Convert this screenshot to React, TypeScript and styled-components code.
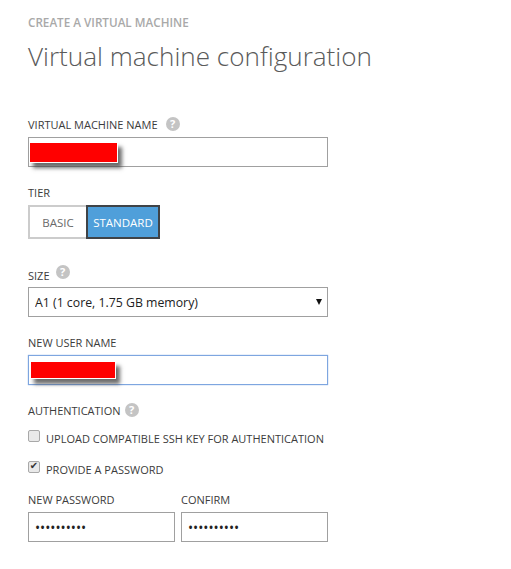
import React from 'react';
import styled, { createGlobalStyle } from 'styled-components';

const GlobalStyle = createGlobalStyle`
  html, body {
    margin: 0;
    background: #fff;
  }
  body {
    font-family: "Open Sans", "Noto Sans", "Liberation Sans", sans-serif;
  }
`;

const Page = styled.div`
  width: 511px;
  height: 569px;
  box-sizing: border-box;
  padding: 15px 0 0 28px;
  overflow: hidden;
`;

const Crumb = styled.div`
  font-size: 11.7px;
  font-weight: 600;
  line-height: 15px;
  color: #a9a9a9;
`;

const Title = styled.h1`
  margin: 8px 0 0;
  font-size: 26.1px;
  font-weight: 300;
  line-height: 36px;
  color: #5a5a5a;
`;

const Form = styled.div`
  width: 300px;
  margin-top: 43px;
  display: flex;
  flex-direction: column;
`;

const LabelRow = styled.div<{ $top: number; $gap?: number }>`
  display: flex;
  align-items: center;
  height: 16px;
  margin-top: ${(p) => p.$top}px;
  margin-bottom: ${(p) => p.$gap ?? 4}px;
`;

const Label = styled.label`
  font-size: 11px;
  line-height: 16px;
  color: #3c3c3c;
  white-space: nowrap;
`;

const Help = styled.span<{ $lift: number; $left: number }>`
  width: 14px;
  height: 14px;
  margin-top: -${(p) => p.$lift}px;
  margin-left: ${(p) => p.$left}px;
  border-radius: 50%;
  background: #c4c4c4;
  color: #fff;
  font-size: 11px;
  font-weight: 700;
  line-height: 14px;
  text-align: center;
`;

const FieldWrap = styled.div`
  position: relative;
  flex: 1;
`;

const Input = styled.input<{ $focus?: boolean }>`
  display: block;
  width: 100%;
  height: 30px;
  box-sizing: border-box;
  padding: 0 6px;
  border: 1px solid ${(p) => (p.$focus ? '#7ea6e0' : '#a0a0a0')};
  border-radius: 0;
  outline: none;
  background: #fff;
  box-shadow: ${(p) => (p.$focus ? '0 0 1px #7ea6e0' : 'none')};
  font-family: inherit;
  font-size: 13.6px;
  color: #222;
`;

const Redaction = styled.div<{ $left: number; $top: number; $w: number; $h: number }>`
  position: absolute;
  left: ${(p) => p.$left}px;
  top: ${(p) => p.$top}px;
  width: ${(p) => p.$w}px;
  height: ${(p) => p.$h}px;
  background: #f00;
  border: 1px solid #fff;
  box-shadow: 4px 5px 4px rgba(60, 60, 60, 0.75);
`;

const Tiers = styled.div`
  display: flex;
`;

const Tier = styled.button<{ $active?: boolean }>`
  height: 34px;
  box-sizing: border-box;
  padding: 0;
  border: 2px solid ${(p) => (p.$active ? '#3f4347' : '#cccccc')};
  border-right-width: ${(p) => (p.$active ? 2 : 0)}px;
  background: ${(p) => (p.$active ? '#4f9fda' : '#fff')};
  color: ${(p) => (p.$active ? '#fff' : '#6a6a6a')};
  width: ${(p) => (p.$active ? 74 : 58)}px;
  font-family: inherit;
  font-size: 11.5px;
`;

const SelectWrap = styled.div`
  position: relative;
`;

const Select = styled.select`
  display: block;
  width: 100%;
  height: 30px;
  box-sizing: border-box;
  padding: 0 6px;
  border: 1px solid #a0a0a0;
  border-radius: 0;
  outline: none;
  background: #fff;
  appearance: none;
  font-family: inherit;
  font-size: 12.3px;
  color: #222;
`;

const Caret = styled.svg`
  position: absolute;
  right: 6px;
  top: 12px;
  width: 6px;
  height: 6px;
`;

const CheckRow = styled.label<{ $top: number }>`
  display: flex;
  align-items: center;
  gap: 6px;
  height: 16px;
  margin-top: ${(p) => p.$top}px;
  font-size: 11px;
  color: #3c3c3c;
  white-space: nowrap;
`;

const Check = styled.input`
  appearance: none;
  position: relative;
  width: 12px;
  height: 12px;
  box-sizing: border-box;
  margin: -4px 0 0;
  border: 1px solid #a8a8a8;
  border-radius: 2px;
  background: #e9e9e9;

  &:checked::after {
    content: "✔";
    position: absolute;
    left: 0;
    top: -2px;
    width: 10px;
    font-family: "DejaVu Sans", sans-serif;
    font-size: 10px;
    line-height: 12px;
    text-align: center;
    color: #333;
  }
`;

const Pair = styled.div`
  display: grid;
  grid-template-columns: 147px 147px;
  column-gap: 6px;
  margin-top: 15px;
`;

const PairLabel = styled(Label)`
  display: block;
  margin-bottom: 4px;
`;

export default function App() {
  return (
    <>
      <GlobalStyle />
      <Page>
        <Crumb>CREATE A VIRTUAL MACHINE</Crumb>
        <Title>Virtual machine configuration</Title>
        <Form>
          <LabelRow $top={0}>
            <Label>VIRTUAL MACHINE NAME</Label>
            <Help $lift={3} $left={8}>?</Help>
          </LabelRow>
          <FieldWrap>
            <Input readOnly />
            <Redaction $left={1} $top={5} $w={87} $h={19} />
          </FieldWrap>
          <LabelRow $top={18}>
            <Label>TIER</Label>
          </LabelRow>
          <Tiers>
            <Tier>BASIC</Tier>
            <Tier $active>STANDARD</Tier>
          </Tiers>
          <LabelRow $top={29} $gap={3}>
            <Label>SIZE</Label>
            <Help $lift={8} $left={6}>?</Help>
          </LabelRow>
          <SelectWrap>
            <Select defaultValue="a1">
              <option value="a1">A1 (1 core, 1.75 GB memory)</option>
            </Select>
            <Caret viewBox="0 0 6 6">
              <path d="M0 0h6L3 6z" fill="#111" />
            </Caret>
          </SelectWrap>
          <LabelRow $top={18}>
            <Label>NEW USER NAME</Label>
          </LabelRow>
          <FieldWrap>
            <Input readOnly $focus />
            <Redaction $left={2} $top={6} $w={84} $h={16} />
          </FieldWrap>
          <LabelRow $top={18} $gap={11}>
            <Label>AUTHENTICATION</Label>
            <Help $lift={2} $left={4}>?</Help>
          </LabelRow>
          <CheckRow $top={0}>
            <Check type="checkbox" readOnly />
            UPLOAD COMPATIBLE SSH KEY FOR AUTHENTICATION
          </CheckRow>
          <CheckRow $top={15}>
            <Check type="checkbox" defaultChecked />
            PROVIDE A PASSWORD
          </CheckRow>
          <Pair>
            <div>
              <PairLabel>NEW PASSWORD</PairLabel>
              <Input type="password" defaultValue="abcdefghij" />
            </div>
            <div>
              <PairLabel>CONFIRM</PairLabel>
              <Input type="password" defaultValue="abcdefghij" />
            </div>
          </Pair>
        </Form>
      </Page>
    </>
  );
}
